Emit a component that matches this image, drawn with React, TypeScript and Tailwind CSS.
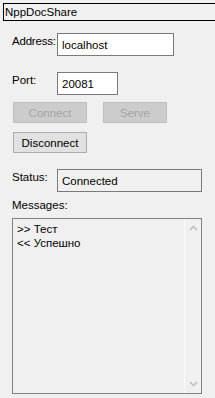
import React from "react";

function Chevron({ down }: { down?: boolean }) {
  return (
    <svg width="9" height="6" viewBox="0 0 9 6" className="block">
      <path
        d={down ? "M1 1 L4.5 4.5 L8 1" : "M1 5 L4.5 1.5 L8 5"}
        fill="none"
        stroke="#bfbfbf"
        strokeWidth="1.6"
      />
    </svg>
  );
}

export default function App() {
  return (
    <div
      className="w-[215px] h-[398px] bg-[#f0f0f0] overflow-hidden text-[11.5px] leading-[14px] text-black flex flex-col"
      style={{ fontFamily: '"Liberation Sans", Arial, sans-serif' }}
    >
      {/* Title */}
      <div className="mt-[3px] ml-[3px] h-[18px] border-y border-l border-black flex items-center pl-[1px]">
        <span>NppDocShare</span>
      </div>

      {/* Address */}
      <div className="mt-[12px] flex items-start pl-[12px] h-[23px]">
        <span className="w-[45px] shrink-0 whitespace-nowrap pt-[1px] tracking-[-0.2px]">Address:</span>
        <div className="w-[117px] h-[23px] bg-white border border-[#7a7a7a] flex items-center pl-[4px]">
          localhost
        </div>
      </div>

      {/* Port */}
      <div className="mt-[16px] flex items-start pl-[12px] h-[23px]">
        <span className="w-[45px] shrink-0 pt-[1px]">Port:</span>
        <div className="w-[61px] h-[23px] bg-white border border-[#7a7a7a] flex items-center pl-[4px]">
          20081
        </div>
      </div>

      {/* Connect / Serve */}
      <div className="mt-[7px] flex pl-[13px] gap-[16px]">
        <div className="w-[74px] h-[21px] bg-[#cccccc] border border-[#bfbfbf] flex items-center justify-center text-[#a3a3a3]">
          Connect
        </div>
        <div className="w-[64px] h-[21px] bg-[#cccccc] border border-[#bfbfbf] flex items-center justify-center text-[#a3a3a3]">
          Serve
        </div>
      </div>

      {/* Disconnect */}
      <div className="mt-[9px] flex pl-[13px]">
        <div className="w-[74px] h-[21px] bg-[#e1e1e1] border border-[#adadad] flex items-center justify-center">
          Disconnect
        </div>
      </div>

      {/* Status */}
      <div className="mt-[16px] flex items-start pl-[12px] h-[23px]">
        <span className="w-[45px] shrink-0 pt-[1px]">Status:</span>
        <div className="w-[145px] h-[23px] bg-[#f0f0f0] border border-[#7a7a7a] flex items-center pl-[4px]">
          Connected
        </div>
      </div>

      {/* Messages label */}
      <div className="mt-[6px] pl-[12px] h-[14px]">Messages:</div>

      {/* Messages box */}
      <div className="mt-[6px] ml-[12px] w-[190px] h-[176px] border border-[#828282] flex">
        <div className="flex-1 pl-[4px] pt-[3px] leading-[14px]">
          <div>&gt;&gt; Тест</div>
          <div>&lt;&lt; Успешно</div>
        </div>
        <div className="w-[17px] h-full border-l border-[#fafafa] flex flex-col justify-between items-center py-[6px]">
          <Chevron />
          <Chevron down />
        </div>
      </div>
    </div>
  );
}
